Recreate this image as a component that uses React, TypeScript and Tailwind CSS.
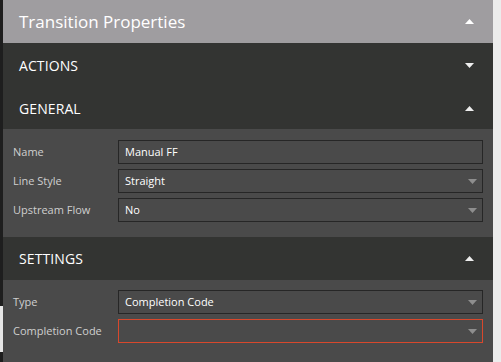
import type { ReactNode } from 'react';

function Caret({ up, className }: { up?: boolean; className: string }) {
  return (
    <svg width="9" height="5" viewBox="0 0 9 5" className={className}>
      {up ? <path d="M4.5 0 L9 5 L0 5 Z" fill="currentColor" /> : <path d="M0 0 L9 0 L4.5 5 Z" fill="currentColor" />}
    </svg>
  );
}

function SectionHeader({ title, open, h }: { title: string; open?: boolean; h: string }) {
  return (
    <div className={`flex items-center justify-between bg-[#333432] pl-[16px] pr-[19px] text-white ${h}`}>
      <span className="text-[14px] tracking-[0.1px]">{title}</span>
      <Caret up={open} className="text-[#eeeeee]" />
    </div>
  );
}

function Field({ label, children, error }: { label: string; children?: ReactNode; error?: boolean }) {
  return (
    <div className="flex items-center">
      <div className="w-[105px] text-[11px] text-[#cfcfcf]">{label}</div>
      <div
        className={`flex h-[24px] flex-1 items-center justify-between border px-[6px] text-[11px] text-white ${
          error ? 'border-[#d8482c]' : 'border-[#262626]'
        }`}
      >
        {children}
      </div>
    </div>
  );
}

function Select({ label, value, error }: { label: string; value?: string; error?: boolean }) {
  return (
    <Field label={label} error={error}>
      <span>{value}</span>
      <Caret className="mr-[-1px] text-[#8e8e8e]" />
    </Field>
  );
}

export default function App() {
  return (
    <div
      className="flex h-[362px] w-[501px] overflow-hidden bg-[#ececec]"
      style={{ fontFamily: '"Open Sans", "Noto Sans", sans-serif' }}
    >
      <div className="flex w-[3px] flex-col bg-[#1e1e1e]">
        <div className="h-[306px]" />
        <div className="h-[46px] bg-[#e6e6e6]" />
      </div>
      <div className="flex w-[490px] flex-col bg-[#4a4a4a]">
        <div className="flex h-[43px] items-center justify-between bg-[#9f9da0] pl-[16px] pr-[19px] text-white">
          <span className="text-[17px]">Transition Properties</span>
          <Caret up className="text-white" />
        </div>
        <SectionHeader title="ACTIONS" h="h-[44px]" />
        <SectionHeader title="GENERAL" open h="h-[42px]" />
        <div className="flex flex-col gap-[5px] pl-[10px] pr-[10px] pt-[11px] pb-[15px]">
          <Field label="Name">
            <span>Manual FF</span>
          </Field>
          <Select label="Line Style" value="Straight" />
          <Select label="Upstream Flow" value="No" />
        </div>
        <SectionHeader title="SETTINGS" open h="h-[43px]" />
        <div className="flex flex-col gap-[5px] pl-[10px] pr-[10px] pt-[10px]">
          <Select label="Type" value="Completion Code" />
          <Select label="Completion Code" error />
        </div>
      </div>
    </div>
  );
}
